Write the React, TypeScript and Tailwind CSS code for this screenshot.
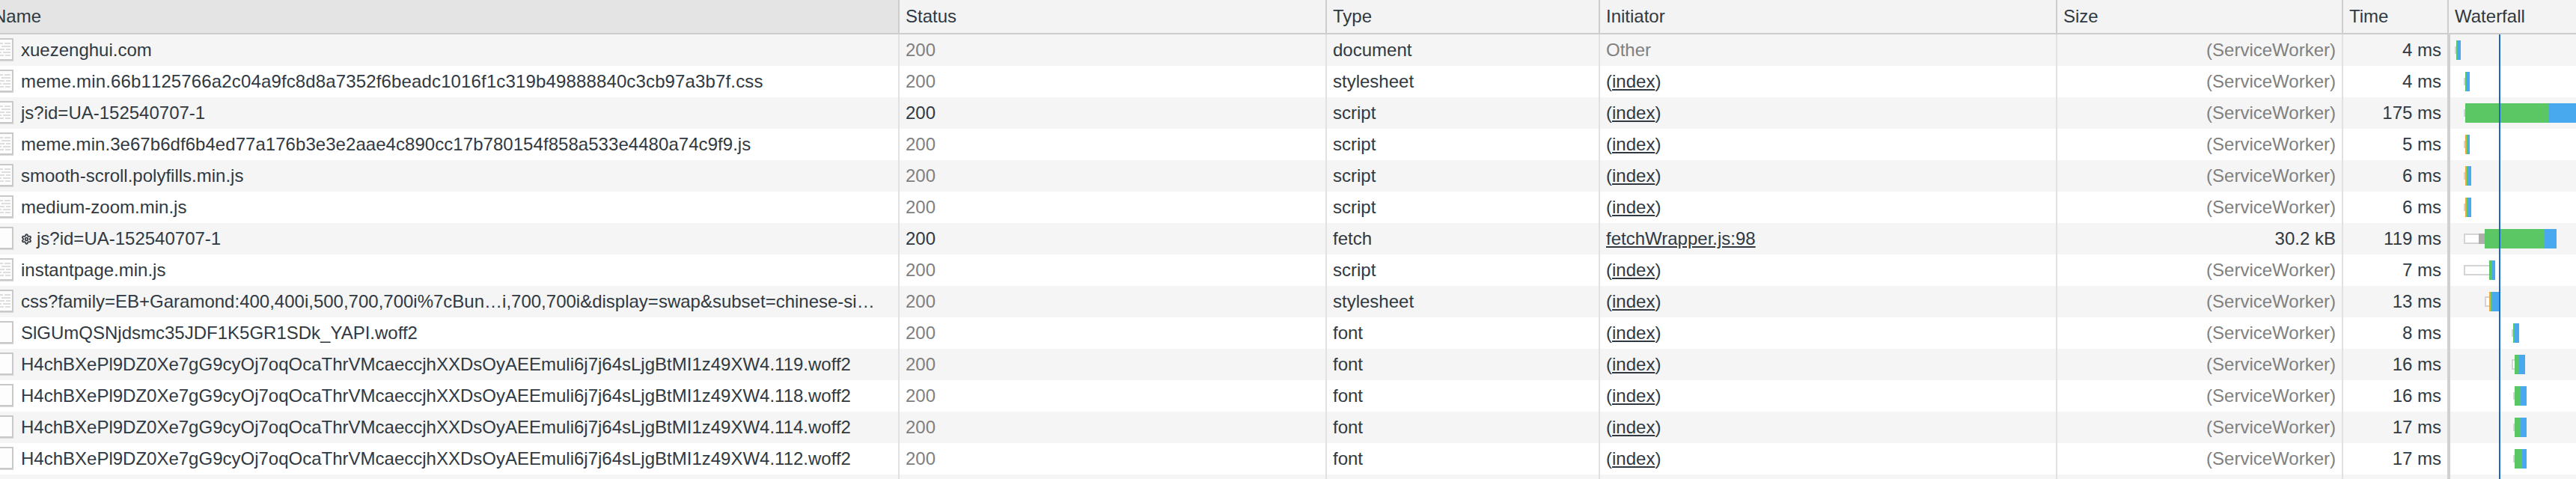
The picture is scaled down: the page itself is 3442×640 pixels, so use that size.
import { Settings } from 'lucide-react';

const rows = [
  { name: 'xuezenghui.com', lines: true, type: 'document', status: 'gray', init: 'Other', time: '4 ms', bars: [
    ['grey', 3280, 3282], ['green', 3282, 3284], ['blue', 3284, 3288],
  ] },
  { name: 'meme.min.66b1125766a2c04a9fc8d8a7352f6beadc1016f1c319b49888840c3cb97a3b7f.css', nameClass: '[font-kerning:none] tracking-[0.14px]', lines: true, type: 'stylesheet', status: 'gray', init: '(index)', time: '4 ms', bars: [
    ['grey', 3292, 3294], ['green', 3294, 3296], ['blue', 3296, 3300],
  ] },
  { name: 'js?id=UA-152540707-1', nameClass: '[font-kerning:none]', lines: true, type: 'script', status: 'dark', init: '(index)', time: '175 ms', bars: [
    ['grey', 3292, 3294], ['green', 3294, 3406], ['blue', 3406, 3442],
  ] },
  { name: 'meme.min.3e67b6df6b4ed77a176b3e3e2aae4c890cc17b780154f858a533e4480a74c9f9.js', nameClass: '[font-kerning:none] tracking-[0.05px]', lines: true, type: 'script', status: 'gray', init: '(index)', time: '5 ms', bars: [
    ['grey', 3292, 3294], ['orange', 3294, 3296], ['green', 3296, 3298], ['blue', 3298, 3300],
  ] },
  { name: 'smooth-scroll.polyfills.min.js', lines: true, type: 'script', status: 'gray', init: '(index)', time: '6 ms', bars: [
    ['grey', 3292, 3294], ['orange', 3294, 3296], ['green', 3296, 3298], ['blue', 3298, 3302],
  ] },
  { name: 'medium-zoom.min.js', lines: true, type: 'script', status: 'gray', init: '(index)', time: '6 ms', bars: [
    ['grey', 3292, 3294], ['orange', 3294, 3296], ['green', 3296, 3298], ['blue', 3298, 3302],
  ] },
  { name: 'js?id=UA-152540707-1', gear: true, nameClass: '[font-kerning:none]', type: 'fetch', status: 'dark', init: 'fetchWrapper.js:98', size: '30.2 kB', time: '119 ms', bars: [
    ['wait', 3292, 3312], ['solid', 3312, 3320], ['green', 3320, 3400], ['blue', 3400, 3416],
  ] },
  { name: 'instantpage.min.js', lines: true, type: 'script', status: 'gray', init: '(index)', time: '7 ms', bars: [
    ['wait', 3292, 3326], ['green', 3326, 3330], ['blue', 3330, 3334],
  ] },
  { name: 'css?family=EB+Garamond:400,400i,500,700,700i%7cBun…i,700,700i&display=swap&subset=chinese-si…', lines: true, type: 'stylesheet', status: 'gray', init: '(index)', time: '13 ms', bars: [
    ['wait', 3320, 3326], ['orange', 3326, 3328], ['green', 3328, 3330], ['blue', 3330, 3339],
  ] },
  { name: 'SlGUmQSNjdsmc35JDF1K5GR1SDk_YAPI.woff2', type: 'font', status: 'gray', init: '(index)', time: '8 ms', bars: [
    ['grey', 3356, 3358], ['green', 3358, 3360], ['blue', 3360, 3366],
  ] },
  { name: 'H4chBXePl9DZ0Xe7gG9cyOj7oqOcaThrVMcaeccjhXXDsOyAEEmuli6j7j64sLjgBtMI1z49XW4.119.woff2', type: 'font', status: 'gray', init: '(index)', time: '16 ms', bars: [
    ['wait', 3356, 3362], ['green', 3360, 3366], ['blue', 3366, 3374],
  ] },
  { name: 'H4chBXePl9DZ0Xe7gG9cyOj7oqOcaThrVMcaeccjhXXDsOyAEEmuli6j7j64sLjgBtMI1z49XW4.118.woff2', type: 'font', status: 'gray', init: '(index)', time: '16 ms', bars: [
    ['grey', 3358, 3360], ['green', 3360, 3368], ['blue', 3368, 3376],
  ] },
  { name: 'H4chBXePl9DZ0Xe7gG9cyOj7oqOcaThrVMcaeccjhXXDsOyAEEmuli6j7j64sLjgBtMI1z49XW4.114.woff2', type: 'font', status: 'gray', init: '(index)', time: '17 ms', bars: [
    ['grey', 3358, 3360], ['green', 3360, 3368], ['blue', 3368, 3376],
  ] },
  { name: 'H4chBXePl9DZ0Xe7gG9cyOj7oqOcaThrVMcaeccjhXXDsOyAEEmuli6j7j64sLjgBtMI1z49XW4.112.woff2', type: 'font', status: 'gray', init: '(index)', time: '17 ms', bars: [
    ['grey', 3358, 3360], ['green', 3360, 3370], ['blue', 3370, 3376],
  ] },
] as { name: string; gear?: boolean; nameClass?: string; lines?: boolean; type: string; status: string; init: string; size?: string; time: string; bars: [string, number, number][] }[];

const WF_LEFT = 3274;

const barClass: Record<string, string> = {
  grey: 'absolute top-[16px] h-[10px] bg-[#d4d4d4]',
  wait: 'absolute top-[14px] h-[14px] border-2 border-r-0 border-[#d4d4d4] bg-white',
  solid: 'absolute top-[14px] h-[14px] bg-[#aeaeae]',
  orange: 'absolute top-[8px] h-[26px] bg-[#f5a73b]',
  green: 'absolute top-[8px] h-[26px] bg-[#5ac664]',
  blue: 'absolute top-[8px] h-[26px] bg-[#49a9ee]',
};

const grid = 'grid grid-cols-[1200px_571px_365px_611px_382px_141px_172px]';

const Bars = ({ bars }: { bars: [string, number, number][] }) => (
  <>
    {bars.map(([kind, from, to]) => (
      <div key={kind} className={barClass[kind]} style={{ left: from - WF_LEFT, width: to - from }} />
    ))}
  </>
);

const FileIcon = ({ lines }: { lines?: boolean }) => (
  <svg viewBox="0 0 27 32" className="ml-[-8px] mr-[9px] h-[32px] w-[27px] shrink-0">
    <rect x="1" y="1" width="25" height="30" fill="#d9d9d9" />
    <rect x="1" y="1" width="24" height="28" fill="#fdfdfd" stroke="#c9c9c9" strokeWidth="2" />
    {lines && (
      <path d="M3 7h9M14 7h8M3 11h5M10 11h12M3 15h11M16 15h6M3 19h7M12 19h10M3 23h10M15 23h7" stroke="#dedede" strokeWidth="2" />
    )}
  </svg>
);

export default function App() {
  const cell = 'flex items-center overflow-hidden whitespace-nowrap border-l-2 border-[#e1e1e1] pl-[8px] pr-[8px]';
  const head = 'flex items-center overflow-hidden border-l-2 border-[#cdcdcd] pl-[8px] h-[44px]';

  return (
    <div className="relative h-[640px] w-[3442px] overflow-hidden bg-white font-['Liberation_Sans',Arial,sans-serif] text-[24px] text-[#303942]">
      {/* Header */}
      <div className={`${grid} h-[46px] border-b-2 border-[#cdcdcd] bg-[#f3f3f3]`}>
        <div className="flex h-[44px] items-center overflow-hidden bg-[#e4e4e4]">
          <span className="ml-[-9px]">Name</span>
        </div>
        <div className={head}>Status</div>
        <div className={head}>Type</div>
        <div className={head}>Initiator</div>
        <div className={head}>Size</div>
        <div className={head}>Time</div>
        <div className={head}>Waterfall</div>
      </div>

      {/* Rows */}
      {rows.map((row, i) => (
        <div key={i} className={`${grid} h-[42px] ${i % 2 === 0 ? 'bg-[#f5f5f5]' : 'bg-white'}`}>
          <div className="flex items-center overflow-hidden whitespace-nowrap">
            <FileIcon lines={row.lines} />
            {row.gear && <Settings className="mr-[6px] h-[15px] w-[15px] shrink-0 text-[#3a4149]" strokeWidth={3} />}
            <span className={row.nameClass}>{row.name}</span>
          </div>
          <div className={`${cell} ${row.status === 'gray' ? 'text-[#808080]' : ''}`}>200</div>
          <div className={cell}>{row.type}</div>
          <div className={`${cell} ${row.init === 'Other' ? 'text-[#808080]' : ''}`}>
            {row.init === 'Other' ? 'Other' : row.init === '(index)' ? <>(<span className="underline">index</span>)</> : <span className="underline">{row.init}</span>}
          </div>
          <div className={`${cell} justify-end ${row.size ? '' : 'text-[#808080]'}`}>{row.size ?? '(ServiceWorker)'}</div>
          <div className={`${cell} justify-end`}>{row.time}</div>
          <div className="relative overflow-hidden border-l-4 border-[#d0d0d0]">
            <Bars bars={row.bars} />
          </div>
        </div>
      ))}
      <div className={`${grid} h-[42px] bg-[#f5f5f5]`}>
        <div />
        <div className={cell} />
        <div className={cell} />
        <div className={cell} />
        <div className={cell} />
        <div className={cell} />
        <div className="border-l-4 border-[#d0d0d0]" />
      </div>

      {/* DOMContentLoaded marker over the waterfall */}
      <div className="absolute bottom-0 left-[3339px] top-[46px] w-[2px] bg-[#1b66c9]" />
    </div>
  );
}
